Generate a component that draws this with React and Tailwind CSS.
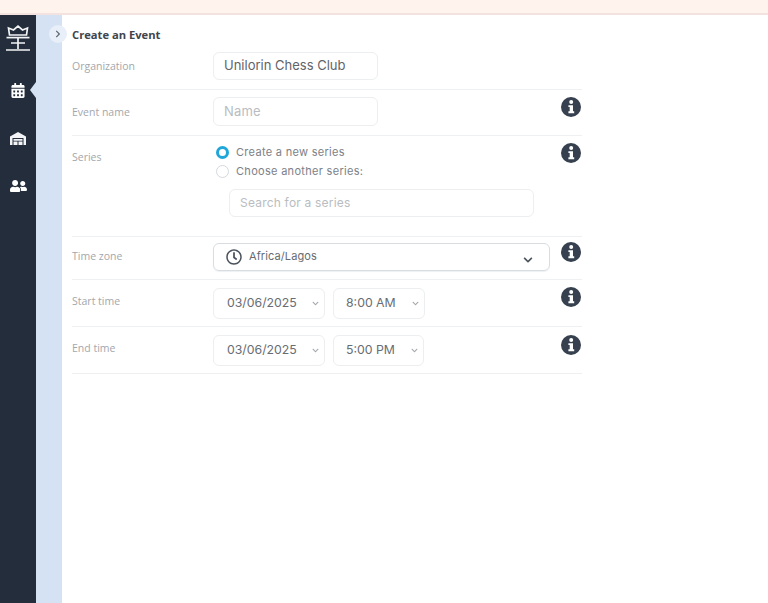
import React from "react";
import { FaCalendarAlt, FaUserFriends, FaChevronRight, FaChevronDown, FaRegClock } from "react-icons/fa";

const Info = () => (
  <svg viewBox="0 0 20 20" className="w-5 h-5 block">
    <circle cx="10" cy="10" r="10" fill="#36404e" />
    <circle cx="10.2" cy="4.9" r="2" fill="#fff" />
    <path d="M7.4 8.2 H12 V14.3 H13.2 V16.2 H7.4 V14.3 H8.7 V10.1 H7.4 Z" fill="#fff" />
  </svg>
);

const Row = ({ label, info, h, pt, labelTop, children, infoTop }) => (
  <div className={`flex items-start border-b border-[#eef0f2] ${h} pr-[1px]`}>
    <div className={`w-[141px] shrink-0 text-[10.5px] leading-[14px] text-[#a3a7ac] font-['Open_Sans',sans-serif] ${labelTop}`}>{label}</div>
    <div className={`${pt} flex-1 min-w-0`}>{children}</div>
    {info && <div className={`${infoTop} w-5 shrink-0`}><Info /></div>}
  </div>
);

const Select = ({ w, value, pl }) => (
  <div className={`${w} h-[31px] ${pl} flex items-center justify-between pr-[5px] rounded-[6px] border border-[#eceef0] bg-white text-[12.3px] text-[#686d73]`}>
    <span className="whitespace-nowrap">{value}</span>
    <FaChevronDown className="w-[7px] h-[7px] text-[#a3a7ac]" />
  </div>
);

export default function App() {
  return (
    <div className="w-[768px] h-[603px] overflow-hidden bg-white flex flex-col font-['Inter',sans-serif]">
      <div className="h-[15px] shrink-0 bg-[#fff3ee] border-b-2 border-[#f3e3e0]" />
      <div className="flex flex-1 min-h-0">
        <div className="w-[36px] shrink-0 bg-[#232d3b] flex flex-col items-center text-white">
          <svg viewBox="0 0 24 26" className="w-[24px] h-[26px] mt-[10px]" fill="none" stroke="#f2f4f6" strokeWidth="1.7">
            <path d="M3.5 10 L2.5 3 L7.5 5 L12 1.2 L16.5 5 L21.5 3 L20.5 10 Z" />
            <path d="M0.5 12.6 H23.5" />
            <path d="M12 12.6 V24 M5 18 H19 M0 25 H24" />
          </svg>
          <div className="relative w-full flex justify-center mt-[32px]">
            <FaCalendarAlt className="w-[14px] h-[15px]" />
            <div className="absolute right-0 top-[-1px] w-0 h-0 border-y-[8px] border-y-transparent border-r-[6px] border-r-[#d5e2f3]" />
          </div>
          <svg viewBox="0 0 16 13" className="w-[16px] h-[13px] mt-[34px]" fill="#f2f4f6">
            <path fillRule="evenodd" d="M0 4.5 L8 0 L16 4.5 V13 H13.5 V6 H2.5 V13 H0 Z" />
            <path d="M3.5 7 H12.5 V8.8 H3.5 Z M3.5 9.6 H7.5 V13 H3.5 Z M8.5 9.6 H12.5 V13 H8.5 Z" />
          </svg>
          <FaUserFriends className="w-[17px] h-[14px] mt-[34px]" />
        </div>
        <div className="relative w-[26px] shrink-0 bg-[#d5e2f3]">
          <div className="absolute left-[13px] top-[10px] w-[18px] h-[18px] rounded-full bg-[#e9eff8] flex items-center justify-center text-[#5d6673]">
            <FaChevronRight className="w-[8px] h-[8px]" />
          </div>
        </div>
        <div className="flex-1 min-w-0 pl-[10px]">
          <div className="w-[510px]">
            <div className="h-[37px] pt-[12px] text-[11.2px] leading-[15px] font-bold text-[#3f454c] font-['Open_Sans',sans-serif]">Create an Event</div>

            <Row label="Organization" h="h-[38px]" pt="pt-0" labelTop="pt-[7px]">
              <div className="w-[165px] h-[28px] px-[10px] flex items-center rounded-[6px] border border-[#eceef0] text-[13px] text-[#5f6469]">Unilorin Chess Club</div>
            </Row>

            <Row label="Event name" info h="h-[46px]" pt="pt-[7px]" labelTop="pt-[15px]" infoTop="pt-[7px]">
              <div className="w-[165px] h-[29px] px-[10px] flex items-center rounded-[6px] border border-[#eceef0] text-[13px] tracking-[0.2px] text-[#b9bdc1]">Name</div>
            </Row>

            <Row label="Series" info h="h-[101px]" pt="pt-[7px]" labelTop="pt-[14px]" infoTop="pt-[7px]">
              <div className="flex items-center h-[18px] pl-[3px] text-[11px] tracking-[0.3px] text-[#7c8187]">
                <span className="w-[13px] h-[13px] rounded-full border-[3.5px] border-[#1ea7d8] bg-white mr-[7px] shrink-0" />
                Create a new series
              </div>
              <div className="flex items-center h-[18px] mt-[1px] pl-[3px] text-[11px] tracking-[0.3px] text-[#7c8187]">
                <span className="w-[13px] h-[13px] rounded-full border border-[#d5d9dd] bg-white mr-[7px] shrink-0" />
                Choose another series:
              </div>
              <div className="ml-[16px] mt-[9px] w-[305px] h-[28px] px-[10px] flex items-center rounded-[6px] border border-[#eceef0] text-[12px] tracking-[0.2px] text-[#b9bdc1]">Search for a series</div>
            </Row>

            <Row label="Time zone" info h="h-[43px]" pt="pt-[6px]" labelTop="pt-[12px]" infoTop="pt-[5px]">
              <div className="w-[337px] h-[28px] pl-[12px] pr-[16px] flex items-center rounded-[6px] border border-[#d9dde1] shadow-[0_1px_1px_#eef1f4] text-[11px] tracking-[0.1px] text-[#666b71]">
                <FaRegClock className="w-[16px] h-[16px] text-[#4a525c] mr-[7px]" />
                <span className="mt-[-1px]">Africa/Lagos</span>
                <FaChevronDown className="w-[10px] h-[10px] ml-auto mt-[5px] text-[#4a525c]" />
              </div>
            </Row>

            <Row label="Start time" info h="h-[47px]" pt="pt-[8px]" labelTop="pt-[14px]" infoTop="pt-[7px]">
              <div className="flex gap-[8px]">
                <Select w="w-[112px]" pl="pl-[13px]" value="03/06/2025" />
                <Select w="w-[92px]" pl="pl-[12px]" value="8:00 AM" />
              </div>
            </Row>

            <Row label="End time" info h="h-[47px]" pt="pt-[8px]" labelTop="pt-[14px]" infoTop="pt-[8px]">
              <div className="flex gap-[8px]">
                <Select w="w-[112px]" pl="pl-[13px]" value="03/06/2025" />
                <Select w="w-[91px]" pl="pl-[12px]" value="5:00 PM" />
              </div>
            </Row>
          </div>
        </div>
      </div>
    </div>
  );
}
